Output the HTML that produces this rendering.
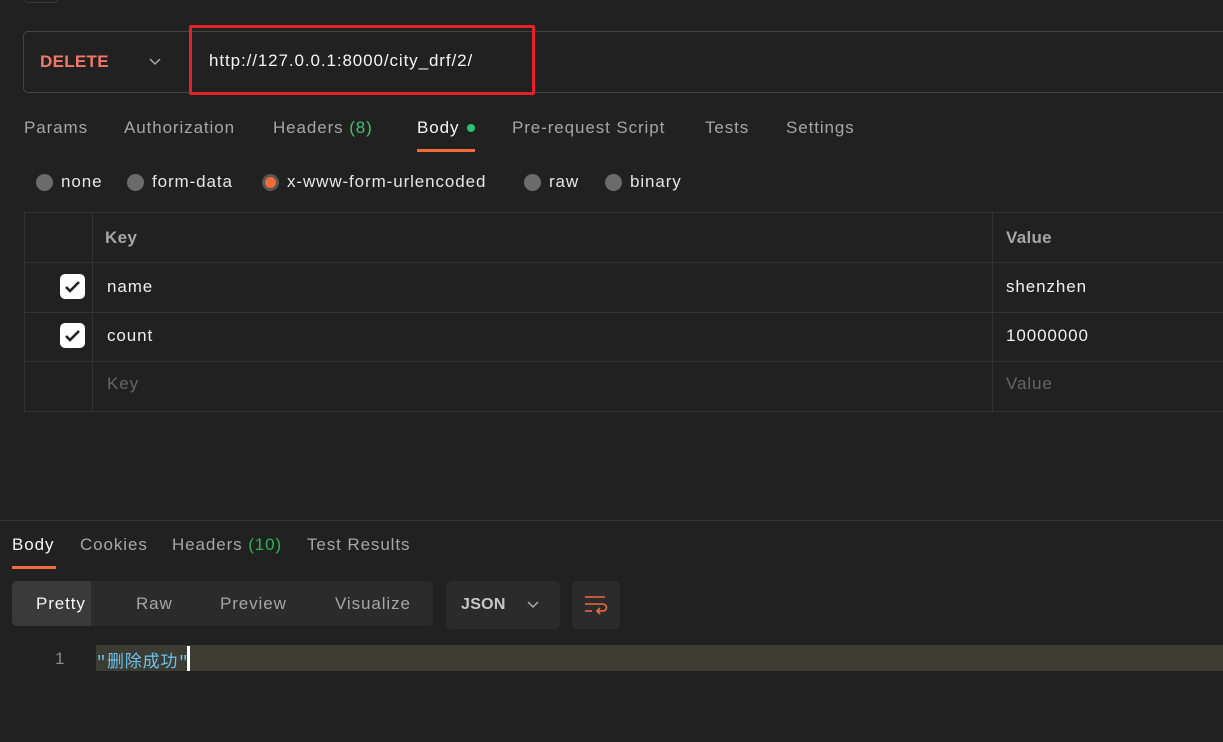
<!DOCTYPE html>
<html><head><meta charset="utf-8"><style>
*{margin:0;padding:0;box-sizing:border-box}
body{width:1223px;height:742px;background:#212121;font-family:"Liberation Sans","Noto Sans CJK SC",sans-serif;color:#e6e6e6;position:relative;overflow:hidden;letter-spacing:0.9px}
.a{position:absolute;white-space:nowrap}
.tab{font-size:17px;color:#a6a6a6;top:118px}
.r{font-size:17px;color:#e6e6e6;top:172px}
.dot{position:absolute;width:17px;height:17px;border-radius:50%;background:#6b6b6b;top:174px}
.cb{position:absolute;left:60px;width:25px;height:25px;background:#fff;border-radius:5px}
.cb svg{position:absolute;left:4px;top:5px}
.hl{position:absolute;left:24px;right:0;height:1px;background:#333}
.vl{position:absolute;top:212px;height:199px;width:1px;background:#333}
.td{font-size:17px;color:#f0f0f0}
</style></head><body>
<div class="a" style="left:24px;top:-8px;width:34px;height:11px;border:1px solid #3a3a3a;border-radius:4px"></div>
<div class="a" style="left:23px;top:31px;width:1210px;height:62px;border:1px solid #444;border-radius:5px"></div>
<div class="a" style="left:40px;top:52px;font-size:17px;font-weight:bold;color:#f0796a;letter-spacing:0.3px">DELETE</div>
<svg class="a" style="left:148px;top:57px" width="14" height="10"><path d="M2 2l5 5 5-5" stroke="#aaa" stroke-width="1.5" fill="none"/></svg>
<div class="a" style="left:189px;top:25px;width:346px;height:70px;border:3px solid #e3222b;border-radius:2px"></div>
<div class="a" style="left:209px;top:51px;font-size:17px;color:#f5f5f5">http://127.0.0.1:8000/city_drf/2/</div>
<div class="a tab" style="left:24px">Params</div>
<div class="a tab" style="left:124px">Authorization</div>
<div class="a tab" style="left:273px">Headers <span style="color:#3cc46e">(8)</span></div>
<div class="a tab" style="left:417px;color:#f5f5f5">Body</div>
<div class="a" style="left:467px;top:124px;width:8px;height:8px;border-radius:50%;background:#2cc46a"></div>
<div class="a" style="left:417px;top:149px;width:58px;height:3px;background:#f26b3a"></div>
<div class="a tab" style="left:512px">Pre-request Script</div>
<div class="a tab" style="left:705px">Tests</div>
<div class="a tab" style="left:786px">Settings</div>
<div class="dot" style="left:36px"></div><div class="a r" style="left:61px">none</div>
<div class="dot" style="left:127px"></div><div class="a r" style="left:152px">form-data</div>
<div class="dot" style="left:262px;background:#555"></div><div class="a" style="left:265px;top:177px;width:11px;height:11px;border-radius:50%;background:#f26b3a"></div><div class="a r" style="left:287px">x-www-form-urlencoded</div>
<div class="dot" style="left:524px"></div><div class="a r" style="left:549px">raw</div>
<div class="dot" style="left:605px"></div><div class="a r" style="left:630px">binary</div>
<div class="a" style="left:24px;top:212px;width:1210px;height:200px;border:1px solid #333"></div>
<div class="hl" style="top:262px"></div><div class="hl" style="top:312px"></div><div class="hl" style="top:361px"></div>
<div class="vl" style="left:92px"></div><div class="vl" style="left:992px"></div>
<div class="a td" style="left:105px;top:228px;color:#a6a6a6;font-weight:bold;letter-spacing:0.3px">Key</div>
<div class="a td" style="left:1006px;top:228px;color:#a6a6a6;font-weight:bold;letter-spacing:0.3px">Value</div>
<div class="cb" style="top:274px"><svg width="17" height="15"><path d="M2 8l4 4 9-9" stroke="#222" stroke-width="2.6" fill="none"/></svg></div>
<div class="cb" style="top:323px"><svg width="17" height="15"><path d="M2 8l4 4 9-9" stroke="#222" stroke-width="2.6" fill="none"/></svg></div>
<div class="a td" style="left:107px;top:277px">name</div>
<div class="a td" style="left:1006px;top:277px">shenzhen</div>
<div class="a td" style="left:107px;top:326px">count</div>
<div class="a td" style="left:1006px;top:326px">10000000</div>
<div class="a td" style="left:107px;top:374px;color:#666">Key</div>
<div class="a td" style="left:1006px;top:374px;color:#666">Value</div>
<div class="a" style="left:0;top:520px;width:1223px;height:1px;background:#333"></div>
<div class="a" style="left:12px;top:535px;font-size:17px;color:#f5f5f5">Body</div>
<div class="a" style="left:12px;top:566px;width:44px;height:3px;background:#f26b3a"></div>
<div class="a" style="left:80px;top:535px;font-size:17px;color:#a6a6a6">Cookies</div>
<div class="a" style="left:172px;top:535px;font-size:17px;color:#a6a6a6">Headers <span style="color:#2cb352">(10)</span></div>
<div class="a" style="left:307px;top:535px;font-size:17px;color:#a6a6a6">Test Results</div>
<div class="a" style="left:12px;top:581px;width:421px;height:45px;background:#2b2b2b;border-radius:5px"></div>
<div class="a" style="left:12px;top:581px;width:79px;height:45px;background:#3a3a3a;border-radius:5px 0 0 5px"></div>
<div class="a" style="left:36px;top:594px;font-size:17px;color:#f5f5f5">Pretty</div>
<div class="a" style="left:136px;top:594px;font-size:17px;color:#a6a6a6">Raw</div>
<div class="a" style="left:220px;top:594px;font-size:17px;color:#a6a6a6">Preview</div>
<div class="a" style="left:335px;top:594px;font-size:17px;color:#a6a6a6">Visualize</div>
<div class="a" style="left:446px;top:581px;width:114px;height:48px;background:#2b2b2b;border-radius:5px"></div>
<div class="a" style="left:461px;top:596px;font-size:16px;font-weight:bold;color:#c8c8c8;letter-spacing:0.3px">JSON</div>
<svg class="a" style="left:526px;top:600px" width="14" height="10"><path d="M2 2l5 5 5-5" stroke="#aaa" stroke-width="1.5" fill="none"/></svg>
<div class="a" style="left:572px;top:581px;width:48px;height:48px;background:#2b2b2b;border-radius:5px"></div>
<svg class="a" style="left:583px;top:593px" width="26" height="24"><path d="M2 4h20M2 11h18a3.5 3.5 0 0 1 0 7h-6M17 15l-3 3 3 3M2 18h7" stroke="#f26b3a" stroke-width="1.6" fill="none"/></svg>
<div class="a" style="left:96px;top:645px;width:1127px;height:26px;background:#3c3c32"></div>
<div class="a" style="left:55px;top:649px;font-size:17px;color:#888">1</div>
<div class="a" style="left:96px;top:647px;font-size:17px;color:#6cc0ec;font-family:'Liberation Mono','Noto Sans CJK SC',monospace;letter-spacing:0.8px">"删除成功"</div>
<div class="a" style="left:187px;top:646px;width:3px;height:25px;background:#fff"></div>
</body></html>
